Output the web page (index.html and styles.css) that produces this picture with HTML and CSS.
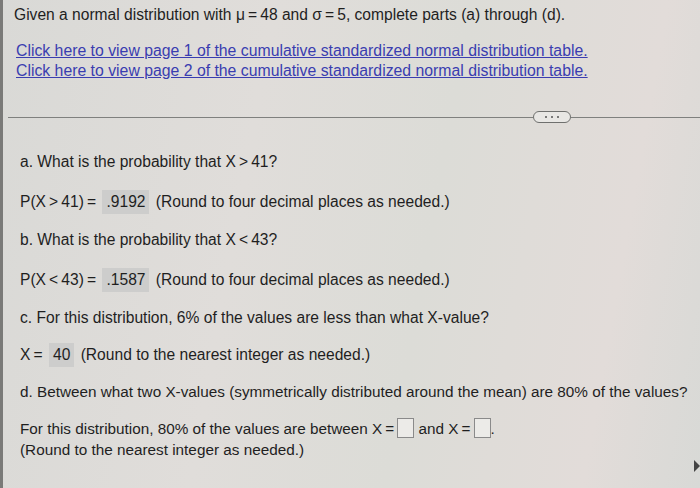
FILE: index.html
```html
<!DOCTYPE html>
<html>
<head>
<meta charset="utf-8">
<link rel="stylesheet" href="styles.css">
</head>
<body>
<div class="page">
  <div class="intro">
    <p class="title">Given a normal distribution with μ&thinsp;=&thinsp;48 and σ&thinsp;=&thinsp;5, complete parts (a) through (d).</p>
    <div class="links">
      <a class="link" href="#">Click here to view page 1 of the cumulative standardized normal distribution table.</a>
      <a class="link" href="#">Click here to view page 2 of the cumulative standardized normal distribution table.</a>
    </div>
  </div>
  <div class="divider">
    <span class="rule"></span>
    <span class="more"><i></i><i></i><i></i></span>
    <span class="rule short"></span>
  </div>
  <div class="questions">
    <p class="q">a. What is the probability that X&thinsp;&gt;&thinsp;41?</p>
    <p class="ans">P(X&thinsp;&gt;&thinsp;41)&thinsp;= <span class="val">.9192</span> (Round to four decimal places as needed.)</p>
    <p class="q">b. What is the probability that X&thinsp;&lt;&thinsp;43?</p>
    <p class="ans">P(X&thinsp;&lt;&thinsp;43)&thinsp;= <span class="val">.1587</span> (Round to four decimal places as needed.)</p>
    <p class="q close">c. For this distribution, 6% of the values are less than what X-value?</p>
    <p class="ans tight">X&thinsp;= <span class="val">40</span> (Round to the nearest integer as needed.)</p>
    <p class="q wide">d. Between what two X-values (symmetrically distributed around the mean) are 80% of the values?</p>
    <div class="ans last">
      <p class="line">For this distribution, 80% of the values are between X&thinsp;=&thinsp;<span class="box"></span> and X&thinsp;=&thinsp;<span class="box"></span>.</p>
      <p class="line">(Round to the nearest integer as needed.)</p>
    </div>
  </div>
  <span class="arrow"></span>
</div>
</body>
</html>
```
FILE: styles.css
```css
html, body {
  margin: 0;
  padding: 0;
}
body {
  width: 700px;
  height: 488px;
  overflow: hidden;
  font-family: "Liberation Sans", Arial, sans-serif;
  color: #1f1f1f;
  background: linear-gradient(100deg, #d9d9d6 0%, #e0ddda 35%, #dcdcd7 60%, #e2dcd9 85%, #d8d9d6 100%);
}
.page {
  position: relative;
  height: 488px;
  border-left: 3px solid #7a7a78;
  box-sizing: border-box;
}
p { margin: 0; }
.intro {
  padding: 5px 0 0 11px;
}
.title {
  font-size: 15.6px;
  line-height: 20px;
}
.links {
  display: flex;
  flex-direction: column;
  margin-top: 16px;
}
.link {
  color: #3a3db0;
  font-size: 15.8px;
  line-height: 20px;
  text-decoration: underline;
  padding-left: 2px;
}
.divider {
  display: flex;
  align-items: center;
  margin-top: 30px;
  padding-left: 5px;
}
.rule {
  flex: 1;
  height: 1px;
  background: #7f807e;
}
.rule.short { flex: 0 0 129px; }
.more {
  display: flex;
  align-items: center;
  justify-content: center;
  gap: 4px;
  width: 36px;
  height: 10px;
  border: 1px solid #6f706e;
  border-radius: 6px;
  background: #e8e7e4;
}
.more i {
  width: 2px;
  height: 2px;
  background: #555;
  border-radius: 1px;
}
.questions {
  display: flex;
  flex-direction: column;
  padding: 29px 0 0 17px;
}
.q {
  font-size: 15.6px;
  line-height: 20px;
  margin-bottom: 20px;
}
.q.close { margin-bottom: 17px; }
.ans {
  font-size: 15.6px;
  line-height: 20px;
  margin-bottom: 18px;
}
.ans.tight { margin-bottom: 17px; }
.q.wide {
  font-size: 15.3px;
  margin-bottom: 16px;
}
.val {
  display: inline-block;
  background: #cdcdcc;
  padding: 2px 4px;
  line-height: 20px;
  margin: -2px 2px;
}
.box {
  display: inline-block;
  width: 15px;
  height: 18px;
  border: 1px solid #8a8a8a;
  background: #ecebe8;
  vertical-align: -4px;
}
.last .line {
  font-size: 15.3px;
  line-height: 21px;
}
.arrow {
  position: absolute;
  right: 0;
  top: 460px;
  width: 0;
  height: 0;
  border-top: 6px solid transparent;
  border-bottom: 6px solid transparent;
  border-left: 6px solid #444;
}
```
